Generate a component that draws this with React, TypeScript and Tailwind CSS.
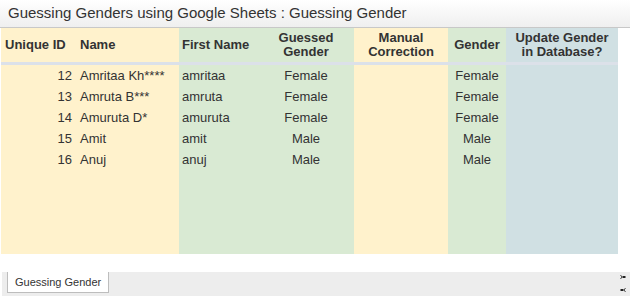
import React from "react";

const rows = [
  { id: 12, name: "Amritaa Kh****", first: "amritaa", guessed: "Female", gender: "Female" },
  { id: 13, name: "Amruta B***", first: "amruta", guessed: "Female", gender: "Female" },
  { id: 14, name: "Amuruta D*", first: "amuruta", guessed: "Female", gender: "Female" },
  { id: 15, name: "Amit", first: "amit", guessed: "Male", gender: "Male" },
  { id: 16, name: "Anuj", first: "anuj", guessed: "Male", gender: "Male" },
];

const cols = "grid-cols-[75px_103px_79px_96px_94px_58px_112px]";

export default function App() {
  return (
    <div className="w-[630px] h-[297px] bg-white overflow-hidden text-[#333]" style={{ fontFamily: '"Liberation Sans", Arial, sans-serif' }}>
      <div className="h-[28px] border-b border-[#c8c8c8] bg-gradient-to-b from-white to-[#efefef] pl-[8px] flex items-center text-[15px] text-[#333]">
        Guessing Genders using Google Sheets : Guessing Gender
      </div>
      <div className="pl-[1px] w-[618px]">
        <div className={`grid ${cols} h-[34px] text-[13px] font-bold leading-[14px] text-[#333]`}>
          <div className="bg-[#fff2cc] flex items-center pl-[4px]">Unique ID</div>
          <div className="bg-[#fff2cc] flex items-center pl-[4px]">Name</div>
          <div className="bg-[#d9ead3] flex items-center pl-[3px]">First Name</div>
          <div className="bg-[#d9ead3] flex items-center justify-center text-center">Guessed<br />Gender</div>
          <div className="bg-[#fff2cc] flex items-center justify-center text-center">Manual<br />Correction</div>
          <div className="bg-[#d9ead3] flex items-center justify-center text-center">Gender</div>
          <div className="bg-[#d0e0e3] flex items-center justify-center text-center">Update Gender<br />in Database?</div>
        </div>
        <div className="h-[3px] bg-[#dce1e9]" />
        <div className={`grid ${cols} h-[189px] text-[13px] text-[#333]`}>
          <div className="bg-[#fff2cc] flex flex-col">
            {rows.map((r) => (
              <div key={r.id} className="h-[21px] flex items-center justify-end pr-[4px]">{r.id}</div>
            ))}
          </div>
          <div className="bg-[#fff2cc] flex flex-col">
            {rows.map((r) => (
              <div key={r.id} className="h-[21px] flex items-center pl-[4px]">{r.name}</div>
            ))}
          </div>
          <div className="bg-[#d9ead3] flex flex-col">
            {rows.map((r) => (
              <div key={r.id} className="h-[21px] flex items-center pl-[3px]">{r.first}</div>
            ))}
          </div>
          <div className="bg-[#d9ead3] flex flex-col">
            {rows.map((r) => (
              <div key={r.id} className="h-[21px] flex items-center justify-center">{r.guessed}</div>
            ))}
          </div>
          <div className="bg-[#fff2cc]" />
          <div className="bg-[#d9ead3] flex flex-col">
            {rows.map((r) => (
              <div key={r.id} className="h-[21px] flex items-center justify-center">{r.gender}</div>
            ))}
          </div>
          <div className="bg-[#d0e0e3]" />
        </div>
      </div>
      <div className="mt-[18px] ml-[2px] h-[24px] bg-[#ededed] flex items-start relative">
        <div className="ml-[5px] h-[21px] px-[7px] bg-white border-l border-r border-b border-[#bdbdbd] flex items-center text-[11px] text-[#333]">
          Guessing Gender
        </div>
        <svg className="absolute right-[4px] top-[2px]" width="6" height="6" viewBox="0 0 6 6">
          <path d="M0.5 1 L2 3 L0.5 5" fill="none" stroke="#444" strokeWidth="1" />
          <rect x="2.5" y="2" width="3" height="2" fill="#222" />
        </svg>
        <svg className="absolute right-[4px] top-[15px]" width="6" height="6" viewBox="0 0 6 6">
          <path d="M5.5 1 L4 3 L5.5 5" fill="none" stroke="#444" strokeWidth="1" />
          <rect x="0.5" y="2" width="3" height="2" fill="#222" />
        </svg>
      </div>
    </div>
  );
}
